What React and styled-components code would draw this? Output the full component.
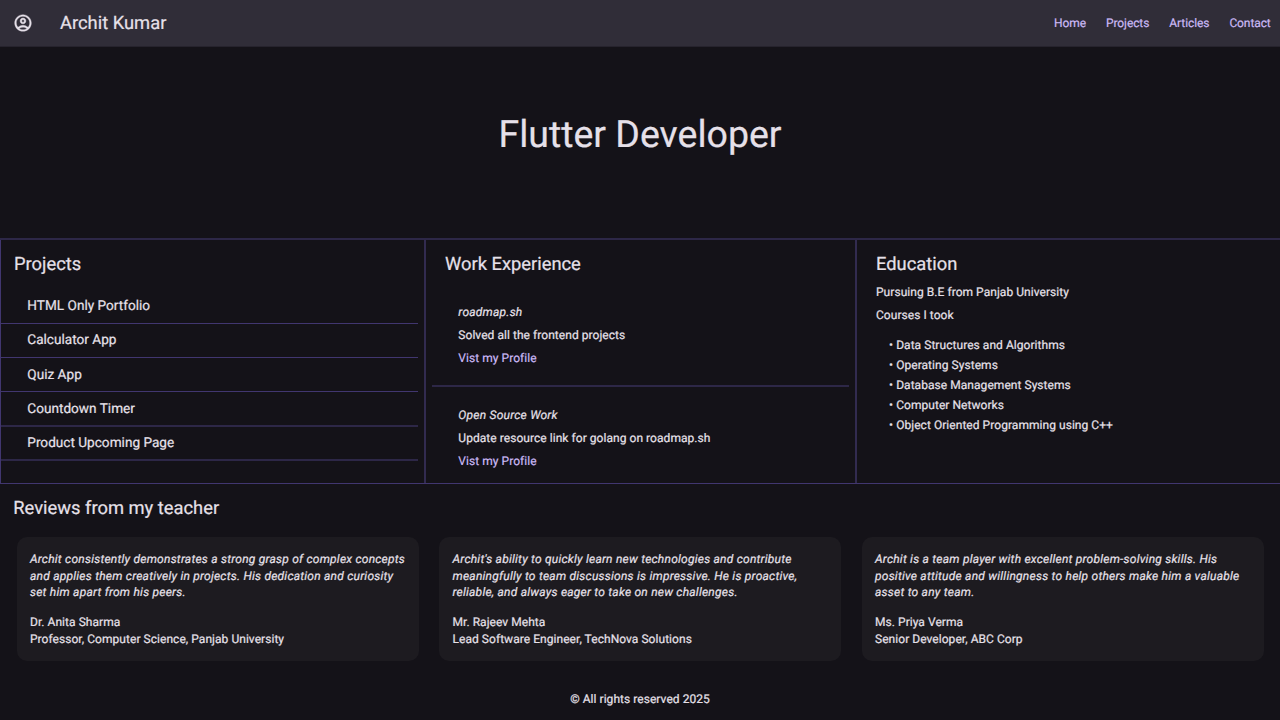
import React from "react";
import styled, { createGlobalStyle } from "styled-components";
import { MdOutlineAccountCircle } from "react-icons/md";

const GlobalStyle = createGlobalStyle`
  * { box-sizing: border-box; }
  body {
    margin: 0;
    background: #141218;
    color: #e6e0e9;
    font-family: Roboto, "Liberation Sans", sans-serif;
    text-rendering: geometricPrecision;
    -webkit-text-stroke: 0.2px currentColor;
    overflow: hidden;
  }
  h1, h2, p, ul { margin: 0; padding: 0; font-weight: 400; }
  a { color: #cbb9f5; text-decoration: none; }
`;

const Page = styled.div`
  display: flex;
  flex-direction: column;
  width: 1280px;
  height: 720px;
`;

const AppBar = styled.header`
  display: flex;
  align-items: center;
  height: 47px;
  padding: 0 9.3px 0 13.33px;
  border-bottom: 1px solid #26232d;
  background: #302d38;
  svg {
    display: block;
    stroke: none;
  }
  svg path:not([fill="none"]) {
    stroke: currentColor;
    stroke-width: 0.4px;
  }
`;

const Brand = styled.div`
  margin-left: 26.7px;
  padding-top: 1px;
  font-size: 18.33px;
  line-height: 25px;
`;

const Nav = styled.nav`
  display: flex;
  gap: 20px;
  margin-left: auto;
  font-size: 12px;
  letter-spacing: -0.09px;
`;

const Hero = styled.section`
  display: flex;
  align-items: center;
  justify-content: center;
  height: 191px;
  padding-bottom: 16px;
  h1 { font-size: 37.5px; line-height: 44px; }
`;

const Columns = styled.main`
  display: grid;
  grid-template-columns: 426px 431px 423px;
  grid-template-rows: 243px;
  height: 246px;
  border-top: 2px solid #2d2747;
  border-bottom: 1px solid #41366f;
`;

const Column = styled.section`
  padding-top: 13px;
  border-right: ${(p) => (p.$last ? "0" : "2px solid #322b50")};
  border-left: ${(p) => (p.$first ? "1px solid #41366f" : "0")};
`;

const Title = styled.h2`
  padding-left: ${(p) => p.$inset}px;
  font-size: 18.33px;
  line-height: 24px;
`;

const ProjectList = styled.ul`
  margin: 12px 6px 0 0;
  list-style: none;
`;

const Project = styled.li`
  height: ${(p) => p.$height}px;
  padding: ${(p) => p.$top}px 0 0 26.3px;
  border-bottom: ${(p) => (p.$soft ? "2px solid #2d2747" : "1px solid #41366f")};
  font-size: 13.6px;
  line-height: 18px;
  letter-spacing: 0.01px;
`;

const Jobs = styled.div`
  padding-top: 8px;
`;

const Job = styled.article`
  height: ${(p) => p.$height}px;
  margin: 0 6px;
  padding: ${(p) => p.$top}px 0 0 26.33px;
  border-bottom: ${(p) => (p.$divided ? "2px solid #2d2747" : "0")};
`;

const Body = styled.p`
  font-size: 12px;
  line-height: ${(p) => p.$line || 23.33}px;
  letter-spacing: ${(p) => (p.$italic ? 0.225 : 0.05)}px;
  font-style: ${(p) => (p.$italic ? "italic" : "normal")};
`;

const Study = styled.div`
  padding: 3.6px 0 0 19px;
`;

const Courses = styled.ul`
  margin: 7.4px 0 0 13px;
  list-style: none;
`;

const Reviews = styled.section`
  padding-top: 13px;
`;

const Cards = styled.div`
  display: grid;
  grid-template-columns: repeat(3, 1fr);
  gap: 20.5px;
  padding: 16px 16.3px 0 16.67px;
`;

const Card = styled.article`
  height: 123.5px;
  padding: 14px 10px 0 13.33px;
  border-radius: 10px;
  background: #1d1b20;
`;

const Author = styled.div`
  margin-top: 13.33px;
`;

const Footer = styled.footer`
  margin-top: 30.5px;
  text-align: center;
`;

const links = ["Home", "Projects", "Articles", "Contact"];

const projects = [
  { name: "HTML Only Portfolio", height: 35, top: 8 },
  { name: "Calculator App", height: 34, top: 7 },
  { name: "Quiz App", height: 34, top: 8 },
  { name: "Countdown Timer", height: 35, top: 8, soft: true },
  { name: "Product Upcoming Page", height: 34, top: 7, soft: true },
];

const jobs = [
  { name: "roadmap.sh", text: "Solved all the frontend projects", top: 15.6, height: 102 },
  {
    name: "Open Source Work",
    text: "Update resource link for golang on roadmap.sh",
    top: 16.8,
    height: 95,
  },
];

const courses = [
  "Data Structures and Algorithms",
  "Operating Systems",
  "Database Management Systems",
  "Computer Networks",
  "Object Oriented Programming using C++",
];

const reviews = [
  {
    lines: [
      "Archit consistently demonstrates a strong grasp of complex concepts",
      "and applies them creatively in projects. His dedication and curiosity",
      "set him apart from his peers.",
    ],
    name: "Dr. Anita Sharma",
    role: "Professor, Computer Science, Panjab University",
  },
  {
    lines: [
      "Archit's ability to quickly learn new technologies and contribute",
      "meaningfully to team discussions is impressive. He is proactive,",
      "reliable, and always eager to take on new challenges.",
    ],
    name: "Mr. Rajeev Mehta",
    role: "Lead Software Engineer, TechNova Solutions",
  },
  {
    lines: [
      "Archit is a team player with excellent problem-solving skills. His",
      "positive attitude and willingness to help others make him a valuable",
      "asset to any team.",
    ],
    name: "Ms. Priya Verma",
    role: "Senior Developer, ABC Corp",
  },
];

export default function App() {
  return (
    <Page>
      <GlobalStyle />
      <AppBar>
        <MdOutlineAccountCircle size={20} />
        <Brand>Archit Kumar</Brand>
        <Nav>
          {links.map((l) => (
            <a key={l}>{l}</a>
          ))}
        </Nav>
      </AppBar>
      <Hero>
        <h1>Flutter Developer</h1>
      </Hero>
      <Columns>
        <Column $first>
          <Title $inset={13}>Projects</Title>
          <ProjectList>
            {projects.map((p) => (
              <Project key={p.name} $height={p.height} $top={p.top} $soft={p.soft}>
                {p.name}
              </Project>
            ))}
          </ProjectList>
        </Column>
        <Column>
          <Title $inset={19}>Work Experience</Title>
          <Jobs>
            {jobs.map((j, i) => (
              <Job key={j.name} $top={j.top} $height={j.height} $divided={i === 0}>
                <Body $italic>{j.name}</Body>
                <Body>{j.text}</Body>
                <Body>
                  <a>Vist my Profile</a>
                </Body>
              </Job>
            ))}
          </Jobs>
        </Column>
        <Column $last>
          <Title $inset={19}>Education</Title>
          <Study>
            <Body>Pursuing B.E from Panjab University</Body>
            <Body>Courses I took</Body>
            <Courses>
              {courses.map((c) => (
                <li key={c}>
                  <Body $line={20}>• {c}</Body>
                </li>
              ))}
            </Courses>
          </Study>
        </Column>
      </Columns>
      <Reviews>
        <Title $inset={13.33}>Reviews from my teacher</Title>
        <Cards>
          {reviews.map((r) => (
            <Card key={r.name}>
              {r.lines.map((l) => (
                <Body key={l} $italic $line={16.67}>
                  {l}
                </Body>
              ))}
              <Author>
                <Body $line={16.67}>{r.name}</Body>
                <Body $line={16.67}>{r.role}</Body>
              </Author>
            </Card>
          ))}
        </Cards>
      </Reviews>
      <Footer>
        <Body $line={16.67}>© All rights reserved 2025</Body>
      </Footer>
    </Page>
  );
}
